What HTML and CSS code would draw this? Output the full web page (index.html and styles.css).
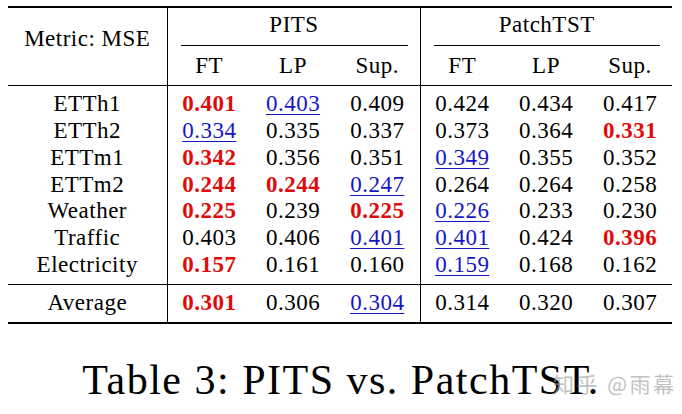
FILE: index.html
```html
<!DOCTYPE html>
<html lang="en">
<head>
<meta charset="utf-8">
<title>Table 3: PITS vs. PatchTST</title>
<link rel="stylesheet" href="styles.css">
</head>
<body>
<div class="page">
  <table class="results">
    <colgroup>
      <col class="c-label"><col class="c-num"><col class="c-num"><col class="c-num-w"><col class="c-num"><col class="c-num"><col class="c-num">
    </colgroup>
    <thead>
      <tr class="group-row">
        <th rowspan="2" class="metric">Metric: MSE</th>
        <th colspan="3" class="group sep"><span class="group-label">PITS</span></th>
        <th colspan="3" class="group sep"><span class="group-label">PatchTST</span></th>
      </tr>
      <tr class="sub-row">
        <th class="sep">FT</th><th>LP</th><th>Sup.</th>
        <th class="sep">FT</th><th>LP</th><th>Sup.</th>
      </tr>
    </thead>
    <tbody class="main">
      <tr><td>ETTh1</td><td class="sep"><span class="best">0.401</span></td><td><span class="second">0.403</span></td><td>0.409</td><td class="sep">0.424</td><td>0.434</td><td>0.417</td></tr>
      <tr><td>ETTh2</td><td class="sep"><span class="second">0.334</span></td><td>0.335</td><td>0.337</td><td class="sep">0.373</td><td>0.364</td><td><span class="best">0.331</span></td></tr>
      <tr><td>ETTm1</td><td class="sep"><span class="best">0.342</span></td><td>0.356</td><td>0.351</td><td class="sep"><span class="second">0.349</span></td><td>0.355</td><td>0.352</td></tr>
      <tr><td>ETTm2</td><td class="sep"><span class="best">0.244</span></td><td><span class="best">0.244</span></td><td><span class="second">0.247</span></td><td class="sep">0.264</td><td>0.264</td><td>0.258</td></tr>
      <tr><td>Weather</td><td class="sep"><span class="best">0.225</span></td><td>0.239</td><td><span class="best">0.225</span></td><td class="sep"><span class="second">0.226</span></td><td>0.233</td><td>0.230</td></tr>
      <tr><td>Traffic</td><td class="sep">0.403</td><td>0.406</td><td><span class="second">0.401</span></td><td class="sep"><span class="second">0.401</span></td><td>0.424</td><td><span class="best">0.396</span></td></tr>
      <tr><td>Electricity</td><td class="sep"><span class="best">0.157</span></td><td>0.161</td><td>0.160</td><td class="sep"><span class="second">0.159</span></td><td>0.168</td><td>0.162</td></tr>
    </tbody>
    <tbody class="avg">
      <tr><td>Average</td><td class="sep"><span class="best">0.301</span></td><td>0.306</td><td><span class="second">0.304</span></td><td class="sep">0.314</td><td>0.320</td><td>0.307</td></tr>
    </tbody>
  </table>
  <p class="caption">Table 3: PITS vs. PatchTST.</p>
  <div class="watermark">知乎 @雨幕</div>
</div>
</body>
</html>
```
FILE: styles.css
```css
* { box-sizing: border-box; }

body {
  margin: 0;
  background: #ffffff;
  color: #000000;
  font-family: "Liberation Serif", "DejaVu Serif", "Noto Serif", serif;
}

.page {
  position: relative;
  width: 682px;
  height: 414px;
  padding-top: 6px;
  overflow: hidden;
}

.results {
  margin-left: 8px;
  width: 664px;
  table-layout: fixed;
  border-collapse: collapse;
  font-family: inherit;
  font-size: 23px;
  letter-spacing: 0.5px;
  line-height: 26.7px;
  border-top: 2px solid #000;
  border-bottom: 2px solid #000;
}

.c-label { width: 159px; }
.c-num { width: 84px; }
.c-num-w { width: 85px; }

.results th,
.results td {
  padding: 0;
  text-align: center;
  font-weight: normal;
  white-space: nowrap;
}

.results .sep { border-left: 1px solid #000; }

.results thead { border-bottom: 1px solid #000; }

.results .metric {
  vertical-align: top;
  padding-top: 18px;
}

.group-row .group { padding-top: 4px; }

.group-label {
  display: block;
  margin: 0 12px 0 13px;
  padding-bottom: 6px;
  border-bottom: 1px solid #000;
}

.sub-row th {
  padding-top: 7px;
  padding-bottom: 6px;
}

.main tr:first-child td { padding-top: 5px; }
.main tr:last-child td { padding-bottom: 6px; }

.avg { border-top: 1px solid #000; }
.avg td { padding-top: 5px; padding-bottom: 5px; }

.best {
  color: #e10a0a;
  font-weight: bold;
}

.second {
  color: #1616c8;
  text-decoration: underline;
  text-decoration-thickness: 1px;
  text-underline-offset: 3px;
}

.caption {
  margin: 32px 0 0;
  font-size: 42px;
  letter-spacing: 1.5px;
  line-height: 48px;
  text-align: center;
}

.watermark {
  position: absolute;
  left: 553px;
  top: 370px;
  font-family: "Noto Sans CJK SC", sans-serif;
  font-size: 21px;
  line-height: 26px;
  color: rgba(165, 165, 165, 0.7);
  letter-spacing: 2.5px;
}
```
